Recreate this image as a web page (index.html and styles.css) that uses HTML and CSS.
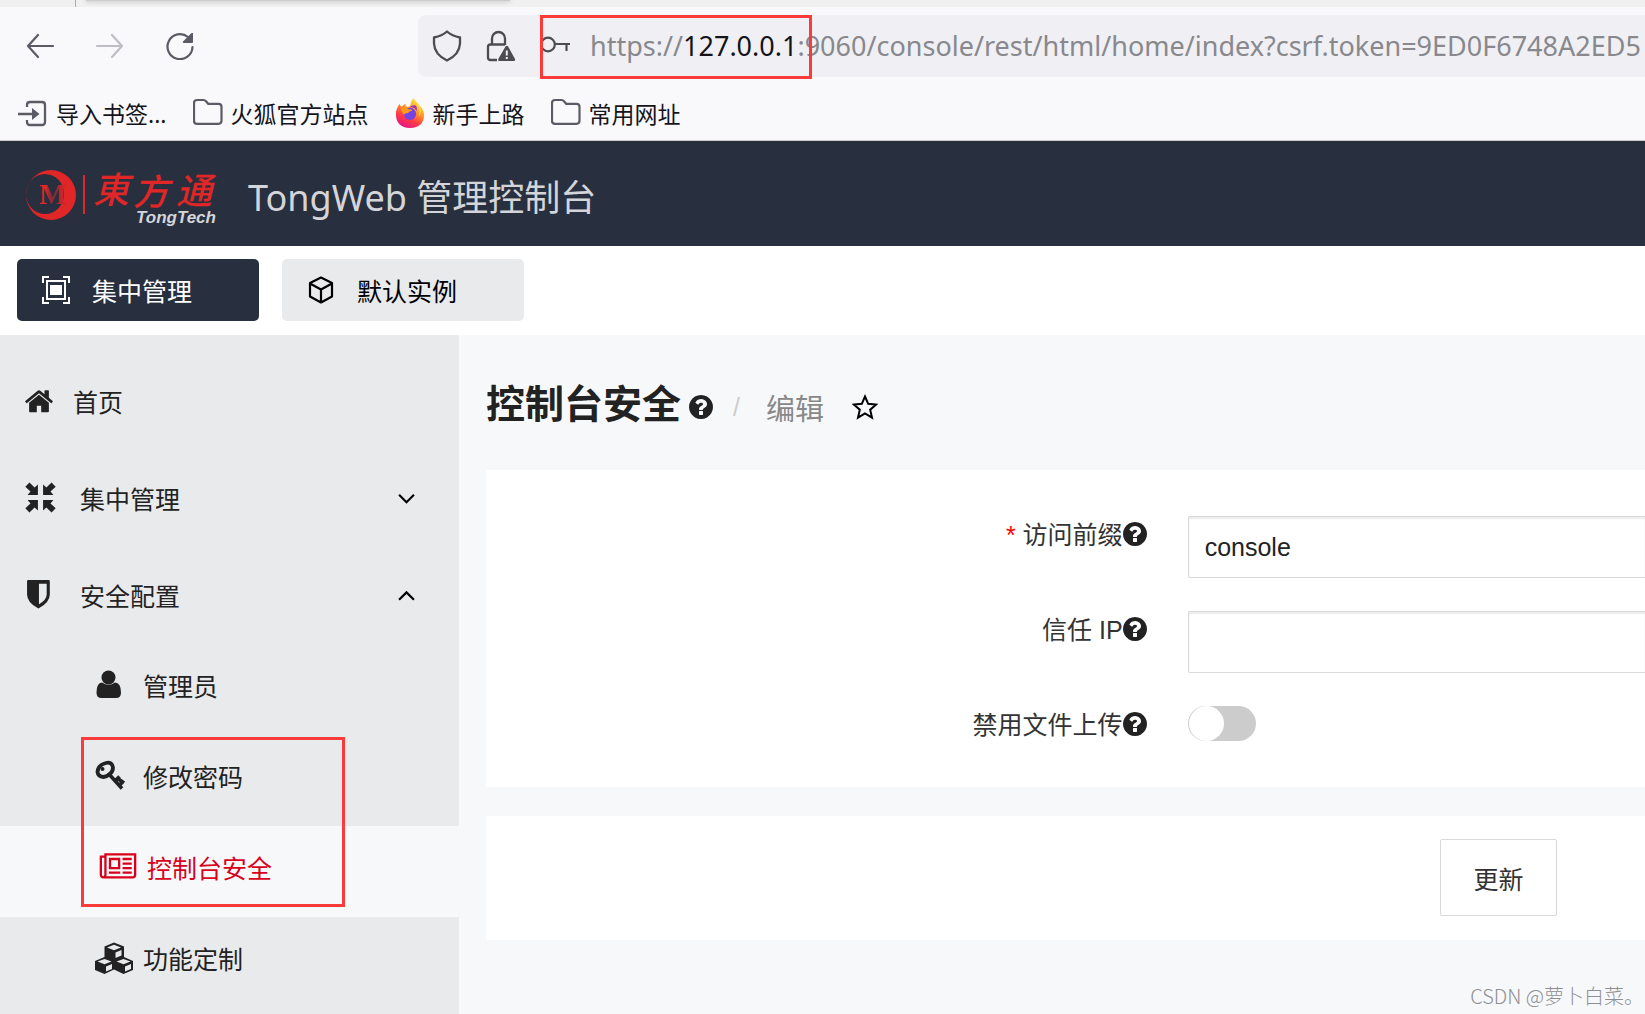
FILE: index.html
```html
<!DOCTYPE html>
<html lang="zh-CN">
<head>
  <meta charset="UTF-8">
  <meta name="viewport" content="width=device-width, initial-scale=1.0">
  <title>TongWeb 管理控制台</title>
  <link rel="stylesheet" href="styles.css">
</head>
<body>

  <!-- Shared icons -->
  <svg class="sprite" aria-hidden="true">
    <symbol id="question" viewBox="128 128 1536 1536">
      <path d="M1024 1376v-192q0-14-9-23t-23-9h-192q-14 0-23 9t-9 23v192q0 14 9 23t23 9h192q14 0 23-9t9-23zm256-672q0-88-55.5-163T1086 425t-170-41q-243 0-371 213-15 24 8 42l132 100q7 6 19 6 16 0 25-12 53-68 86-92 34-24 86-24 48 0 85.5 26t37.5 59q0 38-20 61t-68 45q-63 28-115.5 86.5T768 1020v36q0 14 9 23t23 9h192q14 0 23-9t9-23q0-19 21.5-49.5T1100 957q32-18 49-28.5t46-35 44.5-48 28-60.5 12.5-81zm384 192q0 209-103 385.5T1281.5 1561 896 1664t-385.5-103T231 1281.5 128 896t103-385.5T510.5 231 896 128t385.5 103T1561 510.5 1664 896z"/>
    </symbol>
    <symbol id="folder" viewBox="0 0 30 30">
      <path d="M4 2h6.500q1.500 0 2.500 1.200l2.200 2.600h10.300q3 0 3 3v14q0 3-3 3h-21.500q-3 0-3-3v-17.800q0-3 3-3z" fill="none" stroke="#5b5b66" stroke-width="2.200"/>
    </symbol>
  </svg>

  <div class="tab-strip">
    <div class="tab-edge"></div>
    <div class="tab-current"></div>
  </div>

  <div class="nav-bar">
    <div class="nav-buttons">
      <button type="button" aria-label="后退">
        <svg viewBox="0 0 28 28"><path d="M27 14H2M12 3L2 14l10 11" fill="none" stroke="#5b5b66" stroke-width="2.200" stroke-linecap="round" stroke-linejoin="round"/></svg>
      </button>
      <button type="button" aria-label="前进" disabled>
        <svg viewBox="0 0 28 28"><path d="M1 14h25M16 3l10 11-10 11" fill="none" stroke="#bdbdc4" stroke-width="2.200" stroke-linecap="round" stroke-linejoin="round"/></svg>
      </button>
      <button type="button" aria-label="刷新">
        <svg viewBox="0 0 28 28"><path d="M26.500 15A12.500 12.500 0 1 1 22 5" fill="none" stroke="#5b5b66" stroke-width="2.200" stroke-linecap="round"/><path d="M27 1v9q0 1-1 1h-8.500q-1.200-.3-.5-1.500l8.500-8.500z" fill="#5b5b66"/></svg>
      </button>
    </div>
    <div class="url-bar">
      <svg class="url-icon" viewBox="0 0 30 32"><path d="M15 1.500Q20 6 28 7.500v6q-.5 11-13 17-12.500-6-13-17v-6Q10 6 15 1.500z" fill="none" stroke="#4c4c52" stroke-width="2.300" stroke-linejoin="round"/></svg>
      <svg class="url-icon" viewBox="0 0 30 32"><path d="M6 14V8.500a6.500 6.500 0 0 1 13 0V15M11 30H4.500q-2.500 0-2.500-2.500v-10.500q0-2.500 2.500-2.500h14.500" fill="none" stroke="#4c4c52" stroke-width="2.300"/><path d="M19.500 16.500q1.300-1.500 2.600 0l6.900 12.500q.6 2-1.200 2H13.500q-1.800 0-1.200-2z" fill="#4c4c52"/><path d="M20.800 20.500v5M20.800 27v2" stroke="#f0f0f4" stroke-width="2"/></svg>
      <svg class="url-icon" viewBox="0 0 30 32"><path d="M14 14h16M26.500 14v7" fill="none" stroke="#4c4c52" stroke-width="2.200"/><circle cx="8" cy="14.500" r="6.800" fill="none" stroke="#4c4c52" stroke-width="2.200"/></svg>
      <div class="url-text" role="textbox" aria-label="地址">https://<span class="url-host">127.0.0.1</span>:9060/console/rest/html/home/index?csrf.token=9ED0F6748A2ED5</div>
    </div>
  </div>

  <div class="bookmarks">
    <a href="#">
      <svg viewBox="0 0 30 30"><path d="M9 9V7q0-3 3-3h12q3 0 3 3v17q0 3-3 3H12q-3 0-3-3V22M0 16h18" fill="none" stroke="#5b5b66" stroke-width="2.300"/><path d="M14 10l7.500 6-7.500 6z" fill="#5b5b66"/></svg>
      导入书签...
    </a>
    <a href="#"><svg><use href="#folder"/></svg>火狐官方站点</a>
    <a href="#">
      <svg viewBox="0 0 30 32">
        <defs>
          <linearGradient id="flame" x1=".8" y1="0" x2=".3" y2="1">
            <stop offset="0" stop-color="#fff44f"/>
            <stop offset=".4" stop-color="#ff9a1f"/>
            <stop offset=".7" stop-color="#ff3b47"/>
            <stop offset="1" stop-color="#e31587"/>
          </linearGradient>
        </defs>
        <path d="M19 0q1.500 4 5 7 6 5 6 11 0 13-15 14Q0 31 0 17.500 0 11 4 6q.5 2.500 2 3.500Q8 7 10 6q.2 2 1.500 3.500 3 .2 4-2Q15.500 3 19 0z" fill="url(#flame)"/>
        <circle cx="15" cy="17" r="6.500" fill="#7542e5"/>
        <path d="M5 11q5-2 8.500 1 4.500-.5 3.500 1.500-3 .5-4 2.500-2 0-4.500 1.500Q6 15 5 11z" fill="#ff9a1f"/>
        <path d="M14 10q6-1 8 4 1-4-1-6-3-1-7 2z" fill="#a431c4"/>
        <path d="M20 2q3 5 5 9 1 5-1 9 4-5 2-10-1-4-6-8z" fill="#ffe14a"/>
      </svg>
      新手上路
    </a>
    <a href="#"><svg><use href="#folder"/></svg>常用网址</a>
  </div>

  <header class="header">
    <svg class="logo" viewBox="0 0 196 74" role="img" aria-label="东方通 TongTech">
      <defs>
        <linearGradient id="logo-red">
          <stop offset=".25" stop-color="#e02626"/>
          <stop offset=".4" stop-color="#8f2a34"/>
          <stop offset=".65" stop-color="#8f2a34"/>
          <stop offset=".8" stop-color="#c5262b"/>
        </linearGradient>
      </defs>
      <path fill-rule="evenodd" d="M27 13a25 25 0 1 1 0 50a25 25 0 1 1 0-50zM21 17a19 20 0 1 0 0 40a19 20 0 1 0 0-40z" fill="#e02626"/>
      <text class="logo-m" x="15" y="47">M</text>
      <path d="M60 18v39" stroke="#e02626" stroke-width="2"/>
      <text class="logo-name"><tspan x="69" y="46">東</tspan><tspan x="109" y="48">方</tspan><tspan x="152" y="47">通</tspan></text>
      <text class="logo-en" x="112" y="66">TongTech</text>
    </svg>
    <span class="product">TongWeb 管理控制台</span>
  </header>

  <nav class="mode-tabs">
    <button type="button" class="mode-tab active">
      <svg viewBox="0 0 28 28"><path d="M1 7V1h6M21 1h6v6M27 21v6h-6M7 27H1v-6" fill="none" stroke="currentColor" stroke-width="2"/><path d="M5 5h18v18H5z" fill="none" stroke="currentColor" stroke-width="2"/><path d="M8 9h12v10H8z" fill="currentColor"/></svg>
      集中管理
    </button>
    <button type="button" class="mode-tab">
      <svg viewBox="0 0 28 28"><path d="M14 1.500l11 5.500v13.500L14 26.500 3 20.500V7zM3 7.500l11 6 11-6M14 13.500v13" fill="none" stroke="currentColor" stroke-width="2.200" stroke-linejoin="round"/></svg>
      默认实例
    </button>
  </nav>

  <div class="layout">
    <aside class="sidebar">
      <a href="#" class="menu-item home">
        <svg viewBox="80 220 1632 1320"><path d="M1472 992v480q0 26-19 45t-45 19h-384v-384H768v384H384q-26 0-45-19t-19-45V992q0-1 .5-3t.5-3l575-474 575 474q1 2 1 6zm223-69l-62 74q-8 9-21 11h-3q-13 0-21-7L896 424l-692 577q-12 8-24 7-13-2-21-11l-62-74q-8-10-7-23.500t11-21.500l719-599q32-26 76-26t76 26l244 204V288q0-14 9-23t23-9h192q14 0 23 9t9 23v408l219 182q10 8 11 21.500t-7 23.500z"/></svg>
        首页
      </a>
      <a href="#" class="menu-item">
        <svg viewBox="0 0 30 30"><path d="M12.500 12.500H2.500L5.300 9.300.3 4.600 4.300.5 9.300 5.300l3.200-2.800zM17.500 12.500V2.500l3.200 2.800L25.700.5l4 4.100-5 4.700 2.800 3.200zM12.500 17.500v10l-3.200-2.800-5 4.800-4-4.100 5-4.700-2.800-3.200zM17.500 17.500h10l-2.800 3.200 5 4.700-4 4.100-5-4.800-3.200 2.800z"/></svg>
        集中管理
        <svg class="chevron" viewBox="0 0 16 16"><path d="M1 5.500l7 7 7-7" fill="none" stroke="#000" stroke-width="2"/></svg>
      </a>
      <a href="#" class="menu-item">
        <svg viewBox="0 0 30 30"><path fill-rule="evenodd" d="M2 2q0-1 1-1h20q1 0 1 1v13q0 8-11 13.500Q2 23 2 15zM13.500 4.500v20q7.500-4.500 7.500-9.500V4.500z"/></svg>
        安全配置
        <svg class="chevron" viewBox="0 0 16 16"><path d="M1 13l7-7 7 7" fill="none" stroke="#000" stroke-width="2"/></svg>
      </a>
      <a href="#" class="menu-item sub">
        <svg viewBox="0 0 38 32"><circle cx="13.500" cy="8.500" r="7"/><path d="M7 13.500q6.500 4.500 13 0 6 .5 6 10 0 5.500-5 5.500H6.500q-5 0-5-5.500 0-9.500 5.500-10z"/></svg>
        管理员
      </a>
      <a href="#" class="menu-item sub">
        <svg viewBox="0 0 38 32"><path d="M11 3q6-1.500 7 4.500 0 4-3 6.500t-6.500 3Q3 16.500 2.500 12 3 5 11 3z" fill="none" stroke="#222" stroke-width="3.800"/><circle cx="7.500" cy="9" r="2"/><path d="M13 13l14 15.500M20 21l4.500-4.500M22 18l7 5M24.500 25l3.500-3.500" fill="none" stroke="#222" stroke-width="3.600"/></svg>
        修改密码
      </a>
      <a href="#" class="menu-item sub current">
        <svg viewBox="0 0 2048 1792"><path d="M1024 512H640v384h384V512zm128 640v128H512v-128h640zm0-768v640H512V384h640zm640 768v128h-512v-128h512zm0-256v128h-512V896h512zm0-256v128h-512V640h512zm0-256v128h-512V384h512zM256 1344V384H128v960q0 26 19 45t45 19 45-19 19-45zm1664 0V256H384v1088q0 33-11 64h1483q26 0 45-19t19-45zm128-1216v1216q0 80-56 136t-136 56H192q-80 0-136-56T0 1344V256h256V128h1792z"/></svg>
        控制台安全
      </a>
      <a href="#" class="menu-item sub">
        <svg viewBox="0 0 38 32">
          <path d="M19 .5l10 4v10.500l9 4v9l-9.500 4-9.500-4.500L9.500 32 0 28v-9l9.500-4V4.500z"/>
          <path d="M12 5.500l7-2.800 7 2.800-7 2.800zM20.500 10.500l6-2.500v5.500l-6 2.500zM2.500 19.500L9.500 17l7 2.500-7 2.800zM11 24.500l6-2.500v5l-6 2.500zM21.500 19.500l7-2.500 7 2.500-7 2.800zM30 24.500l6-2.500v5l-6 2.500z" fill="#e9eaec"/>
        </svg>
        功能定制
      </a>
    </aside>

    <main class="content">
      <div class="page-title">
        <h1>控制台安全</h1>
        <svg class="help"><use href="#question"/></svg>
        <span class="slash">/</span>
        <span class="crumb">编辑</span>
        <button type="button" class="star" aria-label="收藏">
          <svg viewBox="0 0 26 26"><path d="M13 2.500l3.200 7.300 8 .7-6 5.200 1.800 8L13 19.500l-7 4.200 1.800-8-6-5.200 8-.7z" fill="none" stroke="#000" stroke-width="2"/></svg>
        </button>
      </div>

      <form class="card form">
        <div class="row">
          <label for="prefix"><span class="required">*</span> 访问前缀<svg class="help"><use href="#question"/></svg></label>
          <input type="text" id="prefix" value="console">
        </div>
        <div class="row">
          <label for="trustIp">信任 IP<svg class="help"><use href="#question"/></svg></label>
          <input type="text" id="trustIp">
        </div>
        <div class="row">
          <label for="disableUpload">禁用文件上传<svg class="help"><use href="#question"/></svg></label>
          <input type="checkbox" id="disableUpload" class="switch">
        </div>
      </form>

      <div class="card actions">
        <button type="button" class="update">更新</button>
      </div>
    </main>
  </div>

  <div class="mark mark-url"></div>
  <div class="mark mark-menu"></div>
  <div class="watermark">CSDN @萝卜白菜。</div>

</body>
</html>
```
FILE: styles.css
```css
* {
  box-sizing: border-box;
}

body {
  margin: 0;
  position: relative;
  min-height: 100vh;
  display: flex;
  flex-direction: column;
  overflow: hidden;
  background-color: #f7f8fa;
  color: #222222;
  font-family: "Liberation Sans", "Noto Sans CJK SC", sans-serif;
  font-size: 25px;
}

a {
  color: inherit;
  text-decoration: none;
}

button {
  padding: 0;
  border: none;
  background: none;
  color: inherit;
  font: inherit;
  cursor: pointer;
}

svg {
  display: block;
  flex: none;
}

.sprite {
  width: 0;
  height: 0;
  position: absolute;
}

/* Browser chrome */
.tab-strip {
  display: flex;
  height: 7px;
  background-color: #f0f0f0;
  overflow: hidden;
}

.tab-edge {
  width: 76px;
  border-right: 1px solid #aeaeae;
}

.tab-current {
  width: 424px;
  height: 1px;
  margin-left: 10px;
  background-color: #cccccc;
  box-shadow: 0 0 4px rgba(0, 0, 0, 0.5);
}

.nav-bar {
  display: flex;
  align-items: center;
  padding: 8px 0;
  background-color: #f9f9fb;
}

.nav-buttons {
  display: flex;
  gap: 42px;
  width: 418px;
  padding-left: 26px;
}

.nav-buttons svg {
  width: 28px;
  height: 28px;
}

.url-bar {
  flex: 1;
  display: flex;
  align-items: center;
  gap: 24px;
  height: 62px;
  padding-left: 14px;
  overflow: hidden;
  background-color: #f0f0f4;
  border-radius: 8px 0 0 8px;
}

.url-icon {
  width: 30px;
  height: 32px;
}

.url-text {
  flex: 1;
  margin-left: -4px;
  padding-bottom: 2px;
  white-space: nowrap;
  color: #88888d;
  font-family: "Noto Sans", sans-serif;
  font-size: 27px;
}

.url-host {
  color: #15141a;
}

.bookmarks {
  display: flex;
  gap: 26px;
  height: 56px;
  padding: 0 18px;
  align-items: center;
  background-color: #f9f9fb;
  border-bottom: 1px solid #cccccc;
  color: #15141a;
  font-family: "Noto Sans", "Noto Sans CJK SC", sans-serif;
  font-size: 23px;
}

.bookmarks a {
  display: flex;
  align-items: center;
  gap: 8px;
}

.bookmarks svg {
  width: 30px;
  height: 30px;
}

/* Console header */
.header {
  display: flex;
  align-items: center;
  gap: 28px;
  height: 105px;
  padding: 0 24px;
  background-color: #282f3f;
}

.logo {
  width: 196px;
  height: 74px;
  overflow: visible;
}

.logo-m {
  fill: url(#logo-red);
  font-family: "Liberation Serif", serif;
  font-size: 29px;
  font-weight: bold;
}

.logo-name {
  fill: #e02626;
  font-family: "Noto Sans CJK TC", sans-serif;
  font-size: 36px;
  font-style: italic;
  font-weight: 500;
}

.logo-en {
  fill: #d4d5d9;
  font-family: "Liberation Sans", sans-serif;
  font-size: 17px;
  font-style: italic;
  font-weight: bold;
}

.product {
  padding-top: 8px;
  color: #d4d5d9;
  font-family: "Noto Sans", "Noto Sans CJK SC", sans-serif;
  font-size: 36px;
  line-height: 48px;
}

.mode-tabs {
  display: flex;
  gap: 23px;
  padding: 13px 17px 14px;
  background-color: #ffffff;
}

.mode-tab {
  display: flex;
  align-items: center;
  gap: 22px;
  width: 242px;
  height: 62px;
  padding-left: 25px;
  border-radius: 5px;
  background-color: #e9eaec;
  color: #000000;
}

.mode-tab.active {
  background-color: #282f3f;
  color: #ffffff;
}

.mode-tab svg {
  width: 28px;
  height: 28px;
}

/* Sidebar */
.layout {
  flex: 1;
  display: flex;
}

.sidebar {
  width: 459px;
  padding-top: 18px;
  background-color: #e9eaec;
}

.menu-item {
  display: flex;
  align-items: center;
  gap: 24px;
  height: 97px;
  padding: 0 44px 2px 25px;
}

.menu-item svg {
  width: 31px;
  height: 31px;
  fill: #222222;
}

.menu-item.home {
  gap: 20px;
}

.menu-item.home svg {
  width: 28px;
  height: 24px;
}

.menu-item .chevron {
  width: 17px;
  height: 17px;
  margin-left: auto;
}

.menu-item.sub {
  gap: 10px;
  height: 91px;
  padding-bottom: 9px;
  padding-left: 95px;
}

.menu-item.sub svg {
  width: 38px;
  height: 32px;
}

.menu-item.current {
  padding-left: 99px;
  background-color: #f7f8fa;
  color: #d9001b;
}

.menu-item.current svg {
  fill: #d9001b;
}

/* Main area */
.content {
  flex: 1;
  padding-left: 27px;
}

.page-title {
  display: flex;
  align-items: center;
  height: 135px;
  padding-top: 9px;
}

h1 {
  margin: 0;
  padding-bottom: 4px;
  font-size: 39px;
  line-height: 56px;
}

.help {
  display: inline-block;
  width: 24px;
  height: 24px;
  fill: #222222;
}

.page-title .help {
  margin-left: 8px;
}

.slash {
  margin: 0 26px 0 20px;
  color: #cccccc;
}

.crumb {
  color: #888888;
  font-size: 29px;
}

.star {
  margin-left: 28px;
}

.star svg {
  width: 26px;
  height: 26px;
}

.card {
  background-color: #ffffff;
}

.form {
  display: flex;
  flex-direction: column;
  gap: 33px;
  padding-top: 46px;
  height: 317px;
}

.row {
  display: flex;
  gap: 41px;
}

.row label {
  width: 57%;
  color: #333333;
  line-height: 38px;
  text-align: right;
}

.row .help {
  vertical-align: -2px;
}

.required {
  color: #ff0000;
}

.row input[type="text"] {
  flex: 1;
  min-width: 0;
  height: 62px;
  padding: 0 16px;
  border: 1px solid #d9d9d9;
  border-right: none;
  border-radius: 2px 0 0 2px;
  box-shadow: inset 0 2px 2px rgba(0, 0, 0, 0.08);
  background-color: #ffffff;
  color: #222222;
  font: inherit;
}

.switch {
  appearance: none;
  width: 68px;
  height: 35px;
  margin: 0;
  padding: 0 1px;
  border-radius: 18px;
  background-color: #cccccc;
}

.switch::before {
  content: "";
  display: block;
  width: 35px;
  height: 35px;
  border-radius: 50%;
  background-color: #ffffff;
}

.switch:checked {
  background-color: #282f3f;
}

.actions {
  display: flex;
  justify-content: flex-end;
  margin-top: 29px;
  padding: 23px 88px 24px 0;
}

.update {
  width: 117px;
  height: 77px;
  border: 1px solid #d9d9d9;
  border-radius: 2px;
  color: #333333;
}

/* Red marks and watermark lie over the page */
.mark {
  position: absolute;
  border: 3px solid #fb3a3a;
  pointer-events: none;
}

.mark-url {
  left: 540px;
  top: 15px;
  width: 272px;
  height: 64px;
}

.mark-menu {
  left: 81px;
  top: 737px;
  width: 264px;
  height: 170px;
}

.watermark {
  position: absolute;
  right: 1px;
  bottom: 4px;
  color: #8e8f92;
  font-family: "Noto Sans CJK SC", sans-serif;
  font-size: 20px;
  font-weight: 300;
}
```
